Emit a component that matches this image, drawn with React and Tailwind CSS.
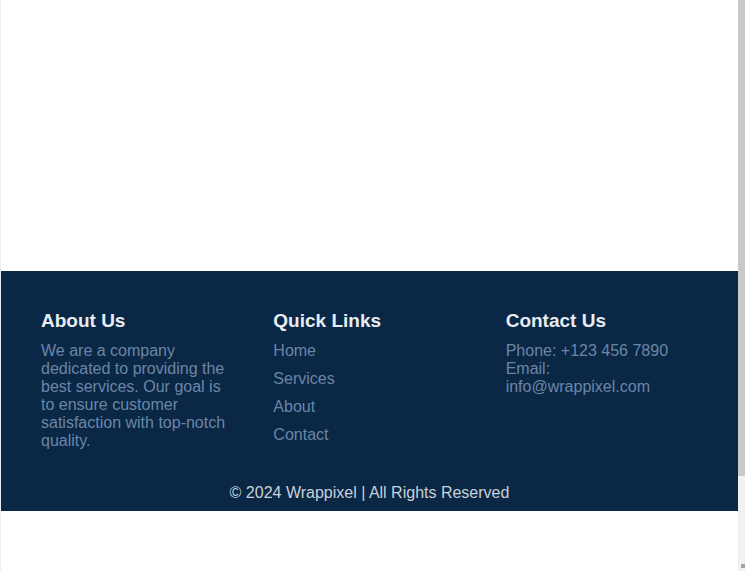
export default function App() {
  return (
    <div className="flex h-[571px] w-[745px] overflow-hidden bg-white font-['Liberation_Sans',Arial,sans-serif]">
      {/* page */}
      <div className="flex w-[738px] flex-col border-l border-[#ececec]">
        <div className="h-[271px] shrink-0 bg-white" />

        <footer className="bg-[#0a2746] px-10 pt-[38px] pb-[9px]">
          <div className="grid grid-cols-3 gap-10">
            <div>
              <h3 className="mb-[9px] text-[19px] leading-6 font-bold text-[#e6ecf2]">About Us</h3>
              <p className="text-[16px] leading-[18px] text-[#6a86a6]">
                We are a company dedicated to providing the best services. Our goal is to ensure customer satisfaction with top-notch quality.
              </p>
            </div>
            <div>
              <h3 className="mb-[9px] text-[19px] leading-6 font-bold text-[#e6ecf2]">Quick Links</h3>
              <ul className="text-[16px] leading-[18px] text-[#6a86a6]">
                <li className="mb-[10px]">Home</li>
                <li className="mb-[10px]">Services</li>
                <li className="mb-[10px]">About</li>
                <li className="mb-[10px]">Contact</li>
              </ul>
            </div>
            <div>
              <h3 className="mb-[9px] text-[19px] leading-6 font-bold text-[#e6ecf2]">Contact Us</h3>
              <p className="text-[16px] leading-[18px] text-[#6a86a6]">Phone: +123 456 7890</p>
              <p className="w-[160px] text-[16px] leading-[18px] text-[#6a86a6]">Email: info@wrappixel.com</p>
            </div>
          </div>
          <p className="mt-[30px] text-center text-[16px] leading-[18px] text-[#c9d1da]">
            © 2024 Wrappixel | All Rights Reserved
          </p>
        </footer>

        <div className="flex-1 bg-white" />
      </div>

      {/* scrollbar */}
      <div className="relative flex w-[7px] flex-col bg-[#f1f1f1]">
        <div className="h-[476px] bg-[#c9c9c9]" />
        <div className="absolute right-0 bottom-[3px] h-[4px] w-[4px] bg-[#a3a3a3]" />
      </div>
    </div>
  )
}
